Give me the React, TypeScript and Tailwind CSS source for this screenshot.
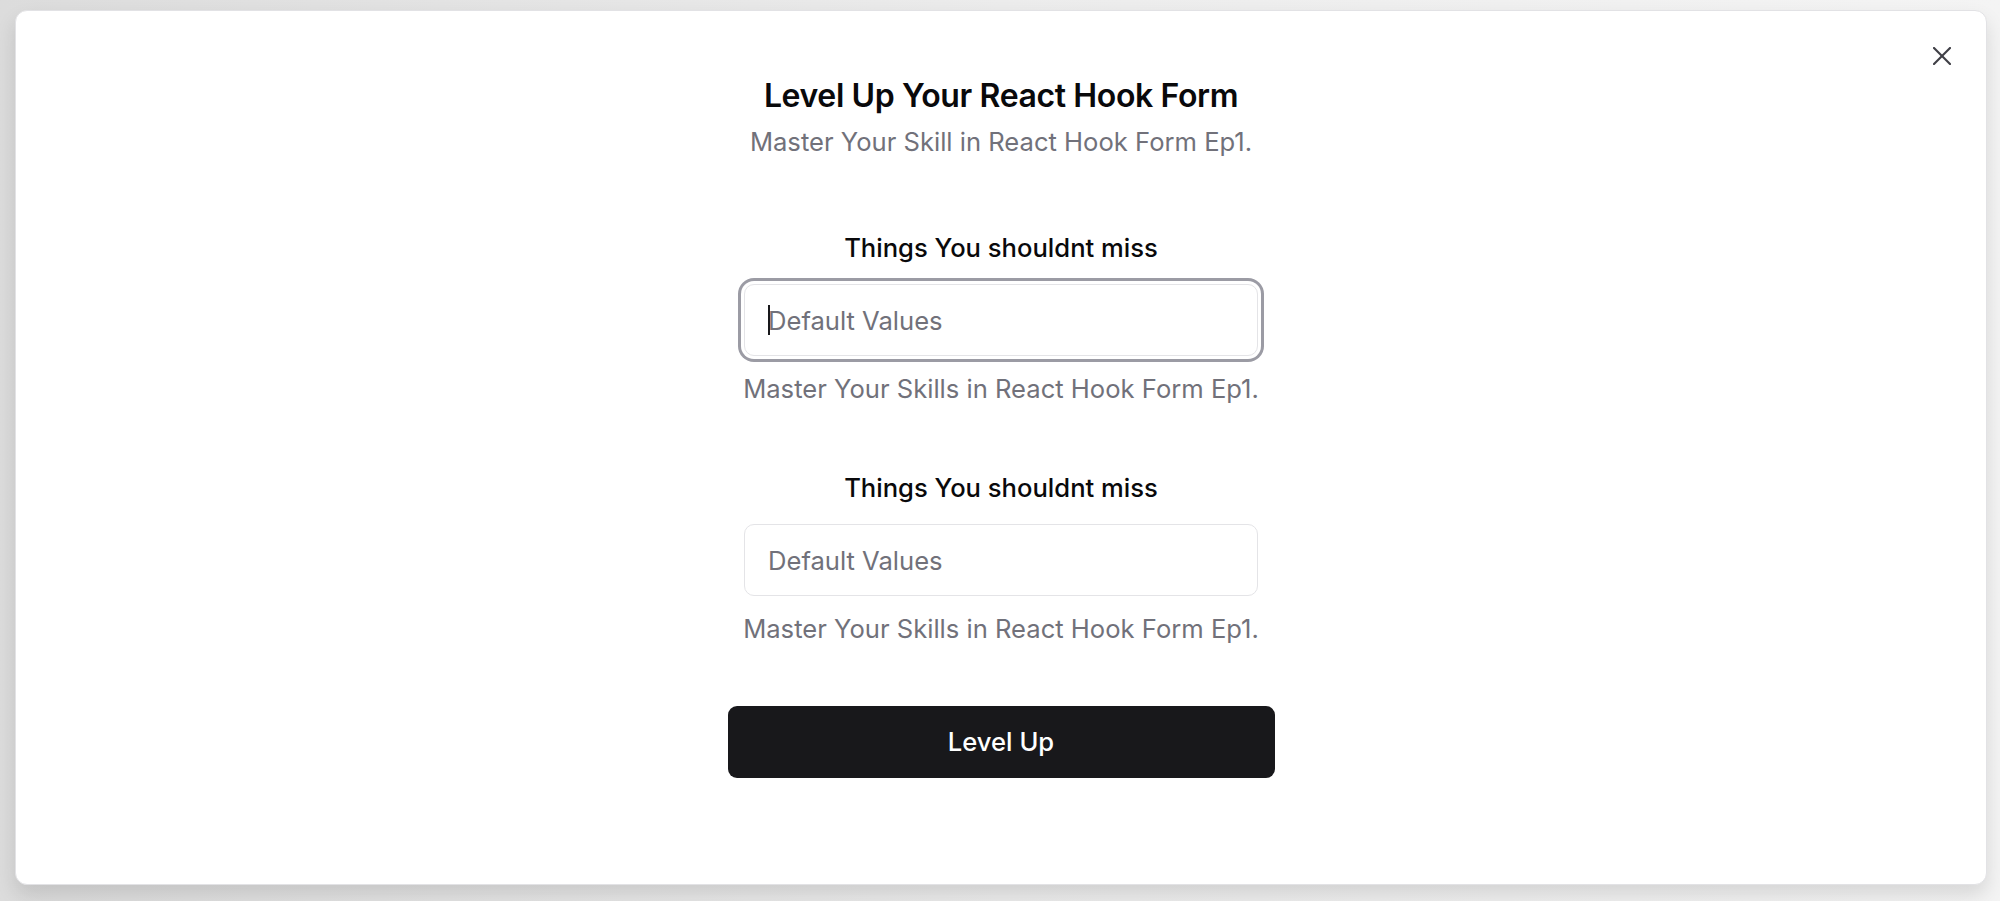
import { useState } from "react";

function CloseIcon() {
  return (
    <svg width="18" height="18" viewBox="0 0 18 18" fill="none" stroke="currentColor" strokeWidth="2.2" strokeLinecap="round">
      <path d="M1 1 17 17" />
      <path d="M17 1 1 17" />
    </svg>
  );
}

function Field({ focused }: { focused?: boolean }) {
  const [value, setValue] = useState("");
  return (
    <div className="flex flex-col items-center">
      <label className="text-[25.6px] leading-[39px] font-medium text-[#09090b]">Things You shouldnt miss</label>
      <div className="relative mt-[17px] w-[514px]">
        <input
          value={value}
          onChange={e => setValue(e.target.value)}
          placeholder="Default Values"
          className={
            "block h-[72px] w-full rounded-[10px] border-[1.5px] border-[#e4e4e7] bg-white pl-[23px] pr-4 text-[25.6px] text-[#09090b] placeholder:text-[#71717a] outline-none " +
            (focused ? "ring-3 ring-[#9b9ba4] ring-offset-3 ring-offset-white" : "")
          }
        />
        {focused && value === "" && (
          <span className="pointer-events-none absolute left-[24px] top-[21px] h-[30px] w-[2px] bg-[#18181b]" />
        )}
      </div>
      <p className="mt-[13px] text-[25.6px] leading-[39px] text-[#71717a]">Master Your Skills in React Hook Form Ep1.</p>
    </div>
  );
}

export default function App() {
  return (
    <div className="h-[901px] w-full overflow-hidden bg-gradient-to-r from-[#dcdcdc] via-[#ececec] to-[#f4f4f4] pt-[10px] pl-[15px] pr-[13px] pb-[16px] font-['Inter',sans-serif]">
      <div className="relative flex h-full flex-col items-center rounded-[12px] border border-[#e2e2e5] bg-white shadow-[0_10px_20px_rgba(0,0,0,0.12)]">
        <button className="absolute right-[35px] top-[36px] text-[#3f3f46]">
          <CloseIcon />
        </button>

        <h2 className="mt-[65px] text-[32px] leading-[40px] font-semibold tracking-[-0.012em] text-[#09090b]">
          Level Up Your React Hook Form
        </h2>
        <p className="mt-[6px] text-[25.6px] leading-[39px] text-[#71717a]">Master Your Skill in React Hook Form Ep1.</p>

        <form className="mt-[67px] flex flex-col items-center" onSubmit={e => e.preventDefault()}>
          <Field focused />
          <div className="mt-[60px]">
            <Field />
          </div>
          <button
            type="submit"
            className="mt-[58px] h-[72px] w-[547px] rounded-[9px] bg-[#18181b] text-[25.6px] font-medium text-white"
          >
            Level Up
          </button>
        </form>
      </div>
    </div>
  );
}
